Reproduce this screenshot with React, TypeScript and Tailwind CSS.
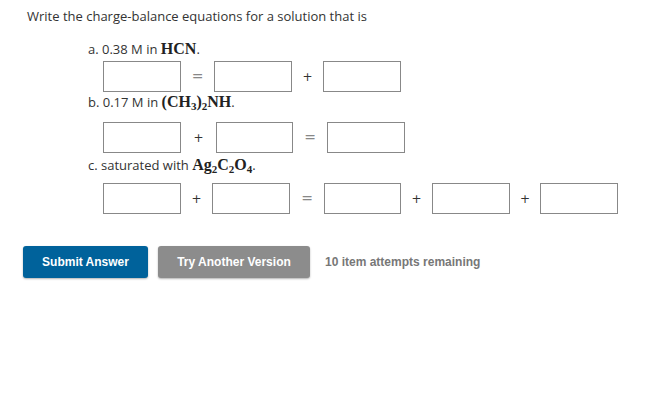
import React from 'react';

const body = "font-['Open_Sans',sans-serif] text-[13px] text-[#333]";
const math = "font-['Liberation_Serif',serif] font-bold text-[16px] leading-[18px] text-[#222]";
const sub = 'relative top-[3px] align-baseline text-[11px] leading-none';

function Box({ w = 78 }: { w?: number }) {
  return <input className="h-[31px] w-[78px] border border-[#888] bg-white outline-none" style={{ width: w }} />;
}

function Op({ sym, w }: { sym: string; w: number }) {
  return (
    <span
      className={`text-center font-['DejaVu_Sans',sans-serif] ${sym === '=' ? 'text-[14px] text-[#888]' : 'text-[12px] text-[#333]'}`}
      style={{ width: w }}
    >
      {sym}
    </span>
  );
}

function App() {
  return (
    <div className={`min-h-screen w-full bg-white pl-[27px] pt-[7px] ${body}`}>
      <p className="h-[18px] leading-[18px]">Write the charge-balance equations for a solution that is</p>

      <div className="pl-[61px]">
        <p className="mt-[15px] h-[18px] leading-[18px]">
          a. 0.38 M in <span className={math}>HCN</span>.
        </p>
        <div className="mt-[3px] flex items-center pl-[15px]">
          <Box />
          <Op sym="=" w={33} />
          <Box />
          <Op sym="+" w={31} />
          <Box />
        </div>

        <p className="mt-[1px] h-[18px] leading-[18px]">
          b. 0.17 M in{' '}
          <span className={math}>
            (CH<sub className={sub}>3</sub>)<sub className={sub}>2</sub>NH
          </span>
          .
        </p>
        <div className="mt-[11px] flex items-center pl-[15px]">
          <Box />
          <Op sym="+" w={35} />
          <Box w={77} />
          <Op sym="=" w={34} />
          <Box />
        </div>

        <p className="mt-[3px] h-[18px] leading-[18px]">
          c. saturated with{' '}
          <span className={math}>
            Ag<sub className={sub}>2</sub>C<sub className={sub}>2</sub>O<sub className={sub}>4</sub>
          </span>
          .
        </p>
        <div className="mt-[9px] flex items-center pl-[15px]">
          <Box />
          <Op sym="+" w={31} />
          <Box />
          <Op sym="=" w={34} />
          <Box w={77} />
          <Op sym="+" w={31} />
          <Box />
          <Op sym="+" w={30} />
          <Box />
        </div>
      </div>

      <div className="mt-[32px] flex items-center gap-[10px] font-['Liberation_Sans',sans-serif] text-[12px] font-bold">
        <button className="-ml-[4px] h-[32px] w-[125px] rounded-[3px] bg-[#00629b] text-white shadow-[0_1px_2px_rgba(0,0,0,0.3)]">
          Submit Answer
        </button>
        <button className="h-[32px] w-[152px] rounded-[3px] bg-[#8c8c8c] text-white shadow-[0_1px_2px_rgba(0,0,0,0.3)]">
          Try Another Version
        </button>
        <span className="ml-[5px] text-[#777]">10 item attempts remaining</span>
      </div>
    </div>
  );
}

export default App;
